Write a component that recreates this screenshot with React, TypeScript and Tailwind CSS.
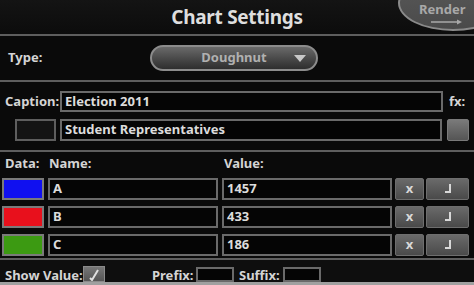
import React from "react";

const font = { fontFamily: '"Noto Sans", "Open Sans", sans-serif' };

function EnterIcon() {
  return (
    <svg width="12" height="12" viewBox="0 0 12 12">
      <path d="M8 1 V9 H3" stroke="#d8d8d8" strokeWidth="2" fill="none" />
    </svg>
  );
}

function DataRow({ color, name, value }: { color: string; name: string; value: string }) {
  return (
    <div className="flex h-[22px] items-stretch">
      <div className={`ml-[2px] w-[42px] border-2 border-[#7a7a7a] ${color}`} />
      <div className="ml-[4px] flex w-[170px] items-center border-2 border-[#6a6a6a] bg-[#050505] pl-[3px] text-[13px] font-bold text-[#dcdcdc]">
        {name}
      </div>
      <div className="ml-[4px] flex w-[170px] items-center border-2 border-[#6a6a6a] bg-[#050505] pl-[3px] text-[13px] font-bold text-[#dcdcdc]">
        {value}
      </div>
      <button className="ml-[3px] flex w-[29px] items-center justify-center rounded-[2px] border border-[#6e6e6e] bg-gradient-to-b from-[#6a6a6a] to-[#4a4a4a] text-[13px] font-bold text-[#d8d8d8]">
        x
      </button>
      <button className="ml-[2px] flex w-[43px] items-center justify-center rounded-[2px] border border-[#6e6e6e] bg-gradient-to-b from-[#6a6a6a] to-[#4a4a4a]">
        <EnterIcon />
      </button>
    </div>
  );
}

export default function App() {
  return (
    <div className="relative h-[285px] w-[474px] overflow-hidden bg-[#0a0a0a] text-[#d4d4d4]" style={font}>
      {/* header */}
      <div className="relative flex h-[34px] items-center justify-center bg-gradient-to-b from-[#141414] to-[#0c0c0c]">
        <h1 className="text-[19px] font-bold tracking-[-0.3px] text-[#dedede]">Chart Settings</h1>
        <button className="absolute right-[-34px] top-[-25px] flex h-[56px] w-[110px] flex-col items-start justify-start rounded-[50%] border-2 border-[#8a8a8a] bg-gradient-to-b from-[#5a5a5a] to-[#4a4a4a] pl-[19px] pt-[26px]">
          <span className="text-[13px] font-bold leading-none text-[#a8a8a8]">Render</span>
          <svg width="32" height="6" viewBox="0 0 32 6" className="ml-[12px] mt-[3px]">
            <path d="M0 3 H28" stroke="#a8a8a8" strokeWidth="1.5" />
            <path d="M26 0.5 L31 3 L26 5.5 Z" fill="#a8a8a8" />
          </svg>
        </button>
      </div>
      <div className="h-[2px] bg-[#5e5e5e]" />

      {/* type */}
      <div className="flex h-[44px] items-center">
        <span className="ml-[8px] w-[142px] text-[13px] font-bold">Type:</span>
        <button className="relative flex h-[26px] w-[168px] items-center justify-center rounded-full border-2 border-[#8c8c8c] bg-gradient-to-b from-[#6a6a6a] to-[#2e2e2e]">
          <span className="text-[13px] font-bold text-[#b0b0b0]">Doughnut</span>
          <svg width="12" height="7" viewBox="0 0 12 7" className="absolute right-[10px] top-[8px]">
            <path d="M0 0 H12 L6 7 Z" fill="#c8c8c8" />
          </svg>
        </button>
      </div>
      <div className="h-[2px] bg-[#5e5e5e]" />

      {/* caption */}
      <div className="flex h-[68px] flex-col justify-center gap-[7px]">
        <div className="flex h-[21px] items-center">
          <span className="ml-[5px] w-[55px] text-[13px] font-bold">Caption:</span>
          <div className="flex h-full w-[383px] items-center border-2 border-[#6a6a6a] bg-[#050505] pl-[3px] text-[13px] font-bold text-[#dcdcdc]">
            Election 2011
          </div>
          <span className="ml-[6px] text-[13px] font-bold">fx:</span>
        </div>
        <div className="flex h-[22px] items-center">
          <div className="ml-[15px] h-full w-[41px] border-2 border-[#5e5e5e] bg-[#141414]" />
          <div className="ml-[4px] flex h-full w-[382px] items-center border-2 border-[#6a6a6a] bg-[#050505] pl-[3px] text-[13px] font-bold text-[#dcdcdc]">
            Student Representatives
          </div>
          <div className="ml-[5px] h-[22px] w-[22px] rounded-[2px] border border-[#7a7a7a] bg-gradient-to-b from-[#7a7a7a] to-[#555555]" />
        </div>
      </div>
      <div className="h-[2px] bg-[#5e5e5e]" />

      {/* data */}
      <div className="flex h-[106px] flex-col gap-[6px] pt-[4px]">
        <div className="flex h-[16px] items-center text-[13px] font-bold">
          <span className="ml-[5px] w-[44px]">Data:</span>
          <span className="w-[175px]">Name:</span>
          <span>Value:</span>
        </div>
        <DataRow color="bg-[#1010f0]" name="A" value="1457" />
        <DataRow color="bg-[#e8101c]" name="B" value="433" />
        <DataRow color="bg-[#3c9a12]" name="C" value="186" />
      </div>
      <div className="h-[2px] bg-[#5e5e5e]" />

      {/* bottom */}
      <div className="flex h-[22px] items-end bg-[#0e0e0e] text-[13px] font-bold">
        <span className="ml-[5px] w-[78px] leading-none">Show Value:</span>
        <div className="flex h-[16px] w-[22px] items-end justify-center border border-[#8a8a8a] bg-gradient-to-b from-[#777] to-[#555]">
          <svg width="14" height="12" viewBox="0 0 14 12">
            <path d="M3 9 L5 11 L11 1" stroke="#e0e0e0" strokeWidth="2" fill="none" />
          </svg>
        </div>
        <span className="ml-[47px] w-[44px] leading-none">Prefix:</span>
        <div className="h-[15px] w-[38px] border-2 border-[#6a6a6a] bg-[#050505]" />
        <span className="ml-[5px] w-[44px] leading-none">Suffix:</span>
        <div className="h-[15px] w-[38px] border-2 border-[#6a6a6a] bg-[#050505]" />
      </div>
      <div className="h-[3px] bg-[#a0a0a0]" />
    </div>
  );
}
